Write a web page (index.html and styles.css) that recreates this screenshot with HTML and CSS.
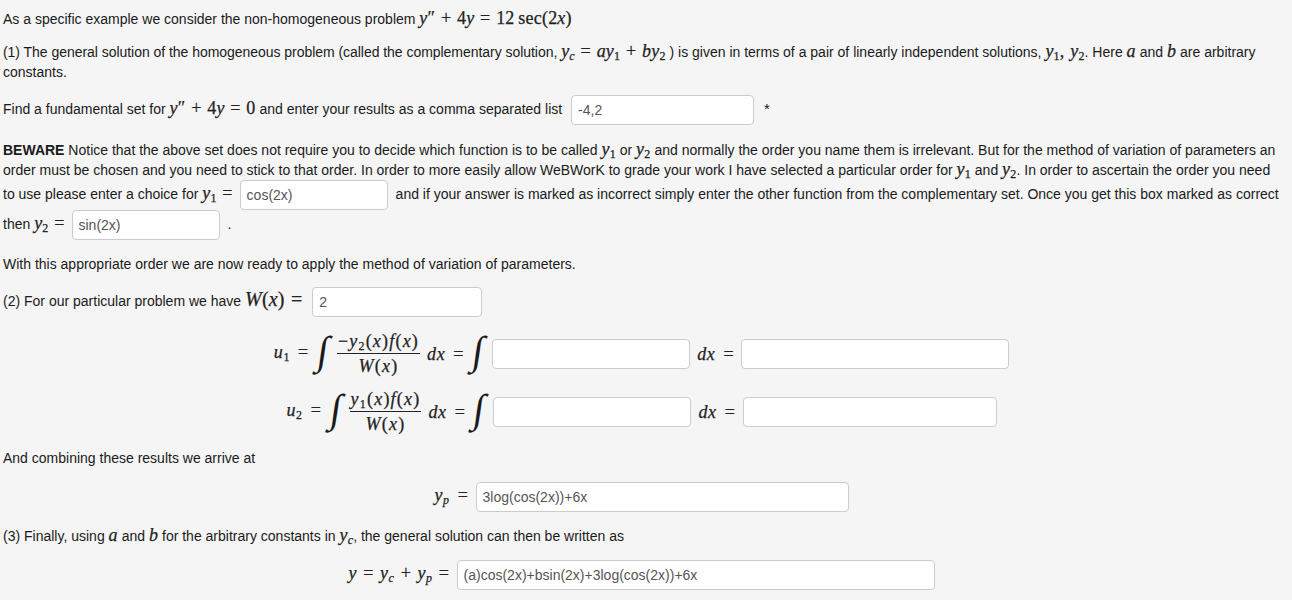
FILE: index.html
```html
<!DOCTYPE html>
<html lang="en">

<head>
    <meta charset="UTF-8">
    <title>Variation of parameters</title>
    <link rel="stylesheet" href="styles.css">
</head>

<body>
    <div class="problem">
        <div class="line first">As a specific example we consider the non-homogeneous problem&nbsp;<span class="math"><i>y</i>″ + 4<i>y</i> = 12&thinsp;sec(2<i>x</i>)</span></div>

        <div class="para two">
            <div class="line"><span class="tight">(1) The general solution of the homogeneous problem (called the complementary solution,</span> <span class="math"><i>y<sub>c</sub></i> = <i>ay</i><sub>1</sub> + <i>by</i><sub>2</sub></span> ) is given in terms of a pair of linearly independent solutions, <span class="math"><i>y</i><sub>1</sub>, <i>y</i><sub>2</sub></span>. Here <span class="math"><i>a</i></span> and <span class="math"><i>b</i></span> are arbitrary</div>
            <div class="line">constants.</div>
        </div>

        <div class="line find">Find a fundamental set for <span class="math"><i>y</i>″ + 4<i>y</i> = 0</span> and enter your results as a comma separated list <span class="answer w-list">-4,2</span><span class="star">*</span></div>

        <div class="para beware">
            <div class="line"><b>BEWARE</b> Notice that the above set does not require you to decide which function is to be called <span class="math"><i>y</i><sub>1</sub></span> or <span class="math"><i>y</i><sub>2</sub></span> and normally the order you name them is irrelevant. But for the method of variation of parameters an</div>
            <div class="line">order must be chosen and you need to stick to that order. In order to more easily allow WeBWorK to grade your work I have selected a particular order for <span class="math"><i>y</i><sub>1</sub></span> and <span class="math"><i>y</i><sub>2</sub></span>. In order to ascertain the order you need</div>
            <div class="line tall">to use please enter a choice for <span class="math"><i>y</i><sub>1</sub> =</span> <span class="answer w-y1">cos(2x)</span><span class="after">and if your answer is marked as incorrect simply enter the other function from the complementary set. Once you get this box marked as correct</span></div>
            <div class="line then">then <span class="math"><i>y</i><sub>2</sub> =</span> <span class="answer w-y2">sin(2x)</span><span class="after">.</span></div>
        </div>

        <div class="line with">With this appropriate order we are now ready to apply the method of variation of parameters.</div>

        <div class="line wronsk">(2) For our particular problem we have <span class="math xl"><i>W</i>(<i>x</i>) =</span> <span class="answer w-wr">2</span></div>

        <div class="display u1">
            <span class="math"><i>u</i><sub>1</sub> =</span>
            <span class="integral">∫</span>
            <span class="frac math"><span class="num">−<i>y</i><sub>2</sub>(<i>x</i>)<i>f</i>(<i>x</i>)</span><span class="den"><i>W</i>(<i>x</i>)</span></span>
            <span class="math"><i>dx</i> =</span>
            <span class="integral">∫</span>
            <span class="answer w-int"></span>
            <span class="math"><i>dx</i> =</span>
            <span class="answer w-res1"></span>
        </div>

        <div class="display u2">
            <span class="math"><i>u</i><sub>2</sub> =</span>
            <span class="integral">∫</span>
            <span class="frac math"><span class="num"><i>y</i><sub>1</sub>(<i>x</i>)<i>f</i>(<i>x</i>)</span><span class="den"><i>W</i>(<i>x</i>)</span></span>
            <span class="math"><i>dx</i> =</span>
            <span class="integral">∫</span>
            <span class="answer w-int"></span>
            <span class="math"><i>dx</i> =</span>
            <span class="answer w-res2"></span>
        </div>

        <div class="line combining">And combining these results we arrive at</div>

        <div class="display yp">
            <span class="math"><i>y<sub>p</sub></i> =</span>
            <span class="answer w-yp">3log(cos(2x))+6x</span>
        </div>

        <div class="line finally">(3) Finally, using <span class="math"><i>a</i></span> and <span class="math"><i>b</i></span> for the arbitrary constants in <span class="math"><i>y<sub>c</sub></i></span>, the general solution can then be written as</div>

        <div class="display general">
            <span class="math"><i>y</i> = <i>y<sub>c</sub></i> + <i>y<sub>p</sub></i> =</span>
            <span class="answer w-gen">(a)cos(2x)+bsin(2x)+3log(cos(2x))+6x</span>
        </div>
    </div>
</body>

</html>
```

FILE: styles.css
```css
body {
    margin: 0;
    padding: 0;
    background-color: #f5f5f5;
    color: #1a1a1a;
    font-family: "Liberation Sans", Arial, sans-serif;
    font-size: 14px;
}

.problem {
    width: 1280px;
    height: 600px;
    padding-left: 3px;
    overflow: hidden;
}

.line {
    height: 20px;
    line-height: 20px;
    white-space: nowrap;
}

.tight {
    letter-spacing: -0.04px;
}

.first {
    margin-top: 9px;
}

.two {
    margin-top: 13px;
}

.find {
    margin-top: 12px;
    height: 30px;
    line-height: 30px;
}

.beware {
    margin-top: 16px;
}

.line.tall {
    height: 28px;
    line-height: 28px;
}

.line.then {
    height: 32px;
    line-height: 32px;
}

.with {
    margin-top: 14px;
}

.wronsk {
    margin-top: 12px;
    height: 30px;
    line-height: 30px;
}

.combining {
    margin-top: 10px;
}

.finally {
    margin-top: 14px;
}

.math {
    font-family: "Liberation Serif", "Times New Roman", serif;
    font-size: 18px;
    line-height: 0;
    letter-spacing: 0.2px;
    word-spacing: 1px;
    color: #222;
    -webkit-text-stroke: 0.25px #222;
}

.display .math {
    letter-spacing: 0.6px;
    word-spacing: 3px;
}

.general .math {
    word-spacing: 1px;
}

.math sub {
    font-size: 12px;
    line-height: 0;
    vertical-align: -3px;
}

.xl {
    font-size: 20px;
    margin-right: 3px;
}

.answer {
    display: inline-block;
    box-sizing: border-box;
    height: 30px;
    line-height: 28px;
    padding: 0 6px;
    vertical-align: middle;
    background-color: #fff;
    border: 1px solid #ccc;
    border-radius: 4px;
    color: #555;
    font-family: "Liberation Sans", Arial, sans-serif;
    font-size: 14px;
    font-weight: normal;
}

.line .answer {
    margin-left: 3px;
}

.line .w-list {
    margin-left: 5px;
}

.w-list { width: 183px; }
.w-y1 { width: 148px; }
.w-y2 { width: 148px; }
.w-wr { width: 170px; }
.w-int { width: 198px; }
.w-res1 { width: 268px; }
.w-res2 { width: 254px; }
.w-yp { width: 373px; }
.w-gen { width: 478px; }

.star {
    margin-left: 10px;
    font-size: 15px;
}

.after {
    margin-left: 8px;
}

.display {
    display: flex;
    justify-content: center;
    align-items: center;
    gap: 7px;
    height: 30px;
    margin-left: -3px;
}

.u1 {
    margin-top: 12px;
    height: 52px;
}

.u2 {
    margin-top: 6px;
    height: 52px;
}

.yp {
    margin-top: 14px;
}

.general {
    margin-top: 14px;
}

.integral {
    font-family: "Liberation Serif", serif;
    font-size: 40px;
    line-height: 44px;
    width: 16px;
    margin: -6px -1px 0;
    text-align: center;
    transform: skewX(-8deg);
}

.display .frac {
    display: inline-flex;
    flex-direction: column;
    align-items: center;
    margin-top: -2px;
    font-size: 18px;
    letter-spacing: 1.2px;
    line-height: 24px;
}

.num {
    padding: 0 1px;
    border-bottom: 1px solid #222;
}
```
